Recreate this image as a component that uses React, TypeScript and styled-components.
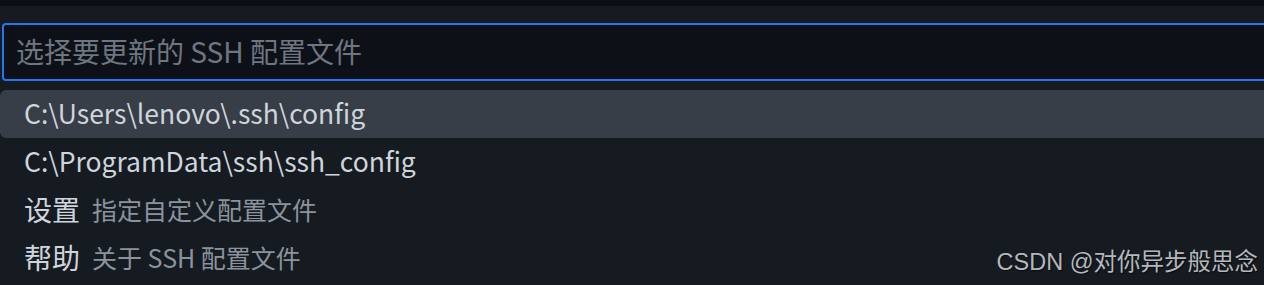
import React from 'react'
import styled, { createGlobalStyle } from 'styled-components'

const GlobalStyle = createGlobalStyle`
  html, body {
    margin: 0;
    padding: 0;
    background: #161b22;
    overflow: hidden;
  }
  body {
    font-family: "Noto Sans CJK SC", "Noto Sans", sans-serif;
  }
`

const items = [
  { label: 'C:\\Users\\lenovo\\.ssh\\config', selected: true },
  { label: 'C:\\ProgramData\\ssh\\ssh_config' },
  { label: '设置', description: '指定自定义配置文件', cjk: true },
  { label: '帮助', description: '关于 SSH 配置文件', cjk: true },
]

const App: React.FC = () => {
  return (
    <Page>
      <GlobalStyle />
      <TopStrip />
      <QuickPick>
        <InputBox>
          <Input placeholder='选择要更新的 SSH 配置文件' readOnly />
        </InputBox>
        <List>
          {items.map(item => (
            <Row key={item.label} selected={item.selected}>
              <Label cjk={item.cjk}>{item.label}</Label>
              {item.description && <Description>{item.description}</Description>}
            </Row>
          ))}
        </List>
      </QuickPick>
      <Watermark>CSDN @对你异步般思念</Watermark>
    </Page>
  )
}

export default App

const Page = styled.div`
  position: relative;
  width: 1264px;
  height: 285px;
  overflow: hidden;
  background: #161b22;
`
const TopStrip = styled.div`
  height: 6px;
  background: #0b0e13;
`
const QuickPick = styled.div`
  width: 1300px;
  padding-top: 17px;

  display: flex;
  flex-direction: column;
`
const InputBox = styled.div`
  height: 58px;
  margin-left: 2px;
  box-sizing: border-box;

  border: 2px solid #2277ee;
  border-radius: 4px;
  background: #0d1117;

  display: flex;
  align-items: center;
`
const Input = styled.input`
  width: 100%;
  padding: 0 0 3px 12px;
  border: none;
  outline: none;
  background: transparent;

  font-family: "Noto Sans CJK SC", "Noto Sans", sans-serif;
  font-size: 28px;
  color: #c9d1d9;

  &::placeholder {
    color: #6e7681;
  }
`
const List = styled.div`
  margin-top: 9px;

  display: flex;
  flex-direction: column;
`
const Row = styled.div<{ selected?: boolean }>`
  height: 48px;
  padding-left: 24px;
  padding-bottom: 3px;
  box-sizing: border-box;
  border-radius: 6px;
  background: ${props => (props.selected ? '#373e47' : 'transparent')};

  display: flex;
  align-items: center;
  gap: 12px;
`
const Label = styled.span<{ cjk?: boolean }>`
  font-size: ${props => (props.cjk ? '28px' : '26.5px')};
  color: #cfd5dc;
  white-space: pre;
`
const Description = styled.span`
  font-size: 25px;
  color: #8b949e;
`
const Watermark = styled.div`
  position: absolute;
  right: 6px;
  bottom: 8px;

  font-family: "Liberation Sans", "Noto Sans CJK SC", sans-serif;
  font-size: 23.5px;
  color: #b4b8bd;
  text-shadow: 1px 1px 1px rgba(0, 0, 0, 0.6);
`
